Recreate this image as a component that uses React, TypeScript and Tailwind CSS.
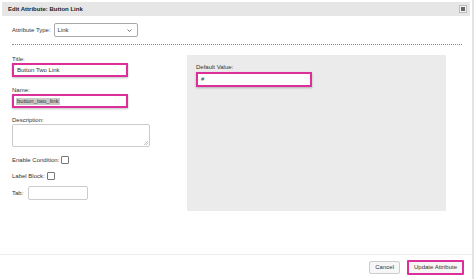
import * as React from "react";

const pink = "border-[#dc2f9a]";

const Label = ({ children }: { children: React.ReactNode }) => (
  <div className="h-[8px] leading-[8px]">{children}</div>
);

const Checkbox = () => (
  <span className="inline-block w-[8px] h-[8px] border border-[#777] rounded-[1px] bg-white" />
);

export default function App() {
  return (
    <div className="w-[474px] h-[279px] bg-white flex flex-col font-['Liberation_Sans',Arial,sans-serif] text-[6px] text-[#333] border-r-2 border-[#e4e4e4] overflow-hidden">
      {/* title bar */}
      <div className="mx-[2px] mt-[2px] h-[14px] bg-[#e6e6e6] flex items-center justify-between pl-[6px] pr-[3px]">
        <span className="font-bold text-[#222]">Edit Attribute: Button Link</span>
        <span className="w-[8px] h-[8px] border border-[#bbb] bg-[#f4f4f4] flex items-center justify-center">
          <span className="w-[4px] h-[4px] bg-[#666]" />
        </span>
      </div>

      <div className="flex-1 flex flex-col px-[12px] pt-[7px]">
        {/* attribute type */}
        <div className="flex items-center gap-[3px] h-[14px]">
          <span>Attribute Type:</span>
          <div className="w-[84px] h-[14px] border border-[#aaa] rounded-[2px] flex items-center justify-between pl-[3px] pr-[5px] bg-white">
            <span>Link</span>
            <svg width="5" height="3" viewBox="0 0 5 3">
              <polyline points="0.5,0.5 2.5,2.5 4.5,0.5" fill="none" stroke="#555" strokeWidth="0.8" />
            </svg>
          </div>
        </div>

        <div className="mt-[7px] w-[450px] border-t border-dotted border-[#8a8a8a]" />

        <div className="flex mt-[10px]">
          {/* left column */}
          <div className="w-[175px] flex flex-col">
            <Label>Title:</Label>
            <div className={`w-[116px] h-[14px] border-2 ${pink} shadow-[0_1px_2px_rgba(0,0,0,0.25)] flex items-center pl-[3px]`}>
              Button Two Link
            </div>

            <div className="mt-[9px]">
              <Label>Name:</Label>
            </div>
            <div className={`w-[116px] h-[14px] border-2 ${pink} shadow-[0_1px_2px_rgba(0,0,0,0.25)] flex items-center pl-[2px]`}>
              <span className="bg-[#c9c9c9] px-[1px] leading-[7px]">button_two_link</span>
            </div>

            <div className="mt-[8px]">
              <Label>Description:</Label>
            </div>
            <div className="relative w-[138px] h-[23px] border border-[#ccc] rounded-[2px]">
              <svg className="absolute right-[1px] bottom-[1px]" width="4" height="4" viewBox="0 0 4 4">
                <line x1="0" y1="4" x2="4" y2="0" stroke="#999" strokeWidth="0.6" />
                <line x1="2" y1="4" x2="4" y2="2" stroke="#999" strokeWidth="0.6" />
              </svg>
            </div>

            <div className="mt-[9px] h-[8px] flex items-center gap-[2px]">
              <span>Enable Condition:</span>
              <Checkbox />
            </div>

            <div className="mt-[8px] h-[8px] flex items-center gap-[2px]">
              <span>Label Block:</span>
              <Checkbox />
            </div>

            <div className="mt-[6px] flex items-center gap-[5px]">
              <span>Tab:</span>
              <div className="w-[60px] h-[14px] border border-[#ccc] rounded-[2px]" />
            </div>
          </div>

          {/* default value panel */}
          <div className="w-[259px] h-[156px] bg-[#ebebeb] pl-[9px] pt-[8px]">
            <Label>Default Value:</Label>
            <div className={`mt-[1px] w-[116px] h-[15px] border-2 ${pink} bg-white shadow-[0_1px_2px_rgba(0,0,0,0.25)] flex items-center pl-[3px]`}>
              #
            </div>
          </div>
        </div>
      </div>

      {/* footer */}
      <div className="h-[25px] border-t border-[#ececec] flex items-center justify-end gap-[7px] pr-[8px]">
        <button className="h-[13px] px-[5px] bg-[#f6f6f6] border border-[#ccc] rounded-[2px] text-[6px] text-[#333]">
          Cancel
        </button>
        <button className={`h-[15px] px-[5px] bg-[#f6f6f6] border-2 ${pink} rounded-[1px] text-[6px] text-[#333]`}>
          Update Attribute
        </button>
      </div>
    </div>
  );
}
